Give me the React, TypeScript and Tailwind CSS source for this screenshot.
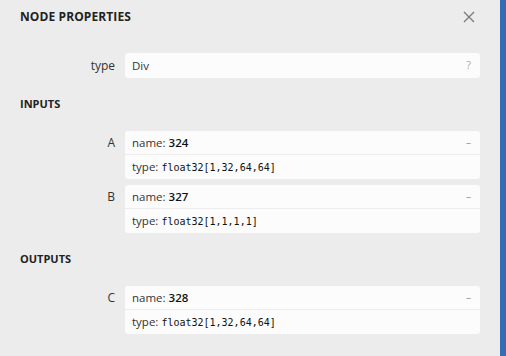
import React from "react";

const sans = { fontFamily: '"Open Sans", "Noto Sans", sans-serif' };

interface Arg {
  label: string;
  name: string;
  type: string;
}

const inputs: Arg[] = [
  { label: "A", name: "324", type: "float32[1,32,64,64]" },
  { label: "B", name: "327", type: "float32[1,1,1,1]" },
];

const outputs: Arg[] = [{ label: "C", name: "328", type: "float32[1,32,64,64]" }];

function ArgRow({ arg }: { arg: Arg }) {
  return (
    <div className="flex">
      <div className="w-[95px] h-[24px] flex items-center justify-end text-[12px] text-[#333]">
        {arg.label}
      </div>
      <div className="ml-[10px] flex-1 bg-[#fcfcfc] rounded-[3px] flex flex-col">
        <div className="h-[24px] flex items-center justify-between px-[7px] text-[11.5px] text-[#333] border-b border-[#ececec]">
          <span>
            name: <span className="text-[#111] font-semibold">{arg.name}</span>
          </span>
          <span className="text-[#999] text-[10px] pr-[2px]">–</span>
        </div>
        <div className="h-[24px] flex items-center px-[7px] text-[11.5px] text-[#333]">
          <span>
            type:{" "}
            <span
              className="text-[#111] font-[500]"
              style={{ fontFamily: '"DejaVu Sans Mono", monospace', fontSize: "10px" }}
            >
              {arg.type}
            </span>
          </span>
        </div>
      </div>
    </div>
  );
}

export default function App() {
  return (
    <div className="w-[506px] h-[356px] bg-[#ececec] flex overflow-hidden" style={sans}>
      <div className="flex-1 flex flex-col px-[20px]">
        <div className="h-[34px] flex items-center justify-between">
          <h1 className="text-[12px] font-bold text-[#222] tracking-[0.1px]">NODE PROPERTIES</h1>
          <svg width="12" height="12" viewBox="0 0 12 12" className="mr-[5px]">
            <path d="M1 1 L11 11 M11 1 L1 11" stroke="#7a7a7a" strokeWidth="1.3" fill="none" />
          </svg>
        </div>
        <div className="flex mt-[19px]">
          <div className="w-[95px] h-[25px] flex items-center justify-end text-[12px] text-[#333]">type</div>
          <div className="ml-[10px] flex-1 h-[25px] bg-[#fcfcfc] rounded-[3px] flex items-center justify-between px-[7px] text-[11.5px] text-[#333]">
            <span>Div</span>
            <span className="text-[#aaa] text-[11px] pr-[2px]">?</span>
          </div>
        </div>
        <h2 className="mt-[18px] h-[16px] flex items-center text-[11px] font-bold text-[#222]">INPUTS</h2>
        <div className="mt-[19px] flex flex-col gap-[6px]">
          {inputs.map((a) => (
            <ArgRow key={a.label} arg={a} />
          ))}
        </div>
        <h2 className="mt-[18px] h-[16px] flex items-center text-[11px] font-bold text-[#222]">OUTPUTS</h2>
        <div className="mt-[19px] flex flex-col gap-[6px]">
          {outputs.map((a) => (
            <ArgRow key={a.label} arg={a} />
          ))}
        </div>
      </div>
      <div className="w-[6px] bg-[#366bb5]" />
    </div>
  );
}
